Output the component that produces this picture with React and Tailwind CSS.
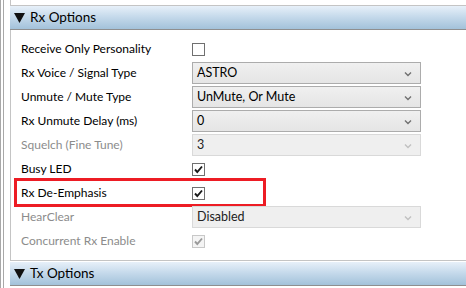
import React from 'react';

const font = { fontFamily: 'Lato, "Noto Sans", sans-serif' };

function Chevron({ disabled }) {
  return (
    <svg width="8" height="6" viewBox="0 0 8 6" className="absolute right-[8px] top-[8px]">
      <path d="M1 1.5 L4 4.5 L7 1.5" fill="none" stroke={disabled ? '#c0c0c0' : '#707070'} strokeWidth="1.4" />
    </svg>
  );
}

function Select({ value, disabled }) {
  return (
    <div
      className={
        'relative h-[22px] w-[229px] border pl-[4px] text-[12.5px] leading-[20px] ' +
        (disabled
          ? 'border-[#d9d9d9] bg-[#efefef] text-[#222]'
          : 'border-[#acacac] bg-gradient-to-b from-[#f0f0f0] to-[#e5e5e5] text-black')
      }
    >
      {value}
      <Chevron disabled={disabled} />
    </div>
  );
}

function Check({ checked, disabled }) {
  return (
    <div
      className={
        'flex h-[13px] w-[13px] items-center justify-center border ' +
        (disabled ? 'border-[#c8c8c8] bg-[#f4f4f4]' : 'border-[#707070] bg-white')
      }
    >
      {checked && (
        <svg width="11" height="11" viewBox="0 0 11 11">
          <path
            d="M2 5.5 L4.3 8 L9 2.5"
            fill="none"
            stroke={disabled ? '#9a9a9a' : '#1a1a1a'}
            strokeWidth="1.9"
          />
        </svg>
      )}
    </div>
  );
}

function Header({ title }) {
  return (
    <div className="flex h-[24px] items-center border-b border-[#8f8f8f] bg-gradient-to-b from-[#e7f0f9] via-[#c3d8ea] to-[#a3c2da] pl-[4px]">
      <svg width="11" height="10" viewBox="0 0 11 10" className="mr-[5px]">
        <path d="M0 0 L11 0 L5.5 10 Z" fill="#111" />
      </svg>
      <span className="text-[13.5px] text-black">{title}</span>
    </div>
  );
}

const rows = [
  { label: 'Receive Only Personality', type: 'check', checked: false },
  { label: 'Rx Voice / Signal Type', type: 'select', value: 'ASTRO' },
  { label: 'Unmute / Mute Type', type: 'select', value: 'UnMute, Or Mute' },
  { label: 'Rx Unmute Delay (ms)', type: 'select', value: '0' },
  { label: 'Squelch (Fine Tune)', type: 'select', value: '3', disabled: true },
  { label: 'Busy LED', type: 'check', checked: true },
  { label: 'Rx De-Emphasis', type: 'check', checked: true, highlight: true },
  { label: 'HearClear', type: 'select', value: 'Disabled', disabled: true },
  { label: 'Concurrent Rx Enable', type: 'check', checked: true, disabled: true },
];

export default function App() {
  return (
    <div className="flex h-[288px] w-[466px] overflow-hidden bg-white" style={font}>
      {/* window frame */}
      <div className="h-full w-[4px] border-x border-[#a8a8a8]" />
      <div className="ml-[6px] flex flex-1 flex-col">
        {/* previous section end */}
        <div className="h-[6px] border-b border-l border-[#c4c4c4]" />

        <Header title="Rx Options" />

        <div className="border-b border-l border-[#c4c4c4] pt-[7px] pb-[7px]">
          {rows.map((r) => (
            <div key={r.label} className="relative flex h-[24px] items-center pl-[10px]">
              {r.highlight && (
                <div className="absolute left-[3px] top-[-3px] h-[29px] w-[252px] border-[3px] border-[#ed1c24]" />
              )}
              <span
                className={
                  'w-[171px] text-[12px] ' + (r.disabled ? 'text-[#8c8c8c]' : 'text-black')
                }
              >
                {r.label}
              </span>
              {r.type === 'check' ? (
                <Check checked={r.checked} disabled={r.disabled} />
              ) : (
                <Select value={r.value} disabled={r.disabled} />
              )}
            </div>
          ))}
        </div>

        <div className="mt-[1px]">
          <Header title="Tx Options" />
        </div>
      </div>
    </div>
  );
}
